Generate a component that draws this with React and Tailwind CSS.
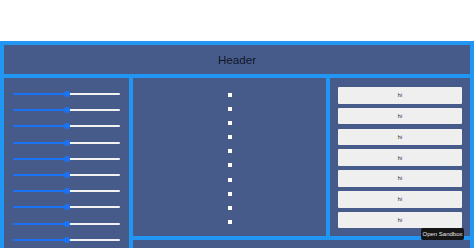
const sliders = Array.from({ length: 12 });
const dots = Array.from({ length: 10 });
const buttons = Array.from({ length: 7 });

const Slider = () => (
  <div className="relative flex h-[16.2px] items-center">
    <div className="h-[2px] w-1/2 rounded-l-full bg-[#1a73f5]" />
    <div className="h-[2px] w-1/2 rounded-r-full bg-[#f2f2f2]" />
    <div className="absolute left-1/2 top-1/2 h-[6px] w-[6px] -translate-x-1/2 -translate-y-1/2 rounded-full bg-[#1a73f5]" />
  </div>
);

const App = () => {
  return (
    <div className="relative h-screen overflow-hidden bg-white pt-[41px] font-['Liberation_Sans',Arial,sans-serif]">
      <div className="grid grid-cols-[125px_193px_1fr] grid-rows-[29px_158px_200px] gap-[4px] bg-[#2196f3] p-[4px]">
        {/* Header */}
        <div className="col-span-3 flex items-center justify-center bg-[#475b8a] text-[11.6px] text-[#10162a]">
          Header
        </div>

        {/* Left: sliders */}
        <div className="row-span-2 flex flex-col bg-[#475b8a] px-[9px] pt-[8px]">
          {sliders.map((_, i) => (
            <Slider key={i} />
          ))}
        </div>

        {/* Middle: bullets */}
        <div className="flex flex-col items-center gap-[10.1px] bg-[#475b8a] pt-[15px]">
          {dots.map((_, i) => (
            <div key={i} className="h-[4px] w-[4px] bg-white" />
          ))}
        </div>

        {/* Right: buttons */}
        <div className="flex flex-col gap-[4.2px] bg-[#475b8a] px-[8px] pt-[9px]">
          {buttons.map((_, i) => (
            <button
              key={i}
              className="flex h-[16.6px] items-center justify-center rounded-[1px] bg-[#efefef] text-[5.5px] text-[#222]"
            >
              hi
            </button>
          ))}
        </div>

        {/* Footer */}
        <div className="col-span-2 bg-[#475b8a]" />
      </div>

      <div className="absolute bottom-[8px] right-[10px] flex h-[12px] w-[43px] items-center justify-center rounded-[2px] bg-[#151515] text-[6px] text-[#e8e8e8]">
        Open Sandbox
      </div>
    </div>
  );
};

export default App;
